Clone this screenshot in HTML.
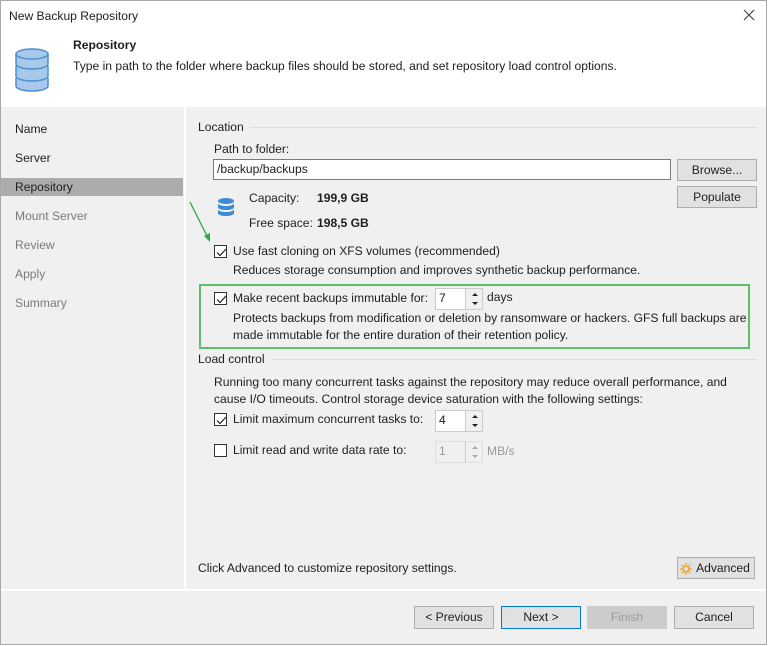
<!DOCTYPE html>
<html><head><meta charset="utf-8"><style>
*{box-sizing:border-box;margin:0;padding:0}
body{width:768px;height:646px;background:#fff;font-family:"Liberation Sans",sans-serif;font-size:12.1px;color:#1e1e1e;position:relative;overflow:hidden}
.a{position:absolute;white-space:nowrap}
.win{position:absolute;left:0;top:0;width:767px;height:645px;border:1px solid #a8a8a8;background:#f0f0f0}
.hdr{position:absolute;left:1px;top:1px;width:765px;height:106px;background:#fff}
.nav{color:#1e1e1e}
.dis{color:#7a7a7a}
.btn{position:absolute;background:#e1e1e1;border:1px solid #adadad;text-align:center;line-height:20px;font-size:12.1px}
.cb{position:absolute;width:13px;height:13px;border:1px solid #333;background:#fff}
.cb svg{position:absolute;left:1px;top:1px}
.inp{position:absolute;background:#fff;border:1px solid #7a7a7a;padding-left:3px;line-height:19px}
.spin{position:absolute;width:17px;height:20px;border-left:1px solid #ccc;background:#f0f0f0}
</style></head><body>
<div class="win"></div>
<div class="hdr"></div>
<div class="a" style="left:9px;top:9px">New Backup Repository</div>
<svg class="a" style="left:742px;top:8px" width="14" height="14"><path d="M2 2L12 12M12 2L2 12" stroke="#444" stroke-width="1.2"/></svg>
<svg class="a" style="left:14px;top:44px" width="40" height="50">
<g fill="#a9c9ea" stroke="#4d8fd0" stroke-width="1.5">
<path d="M2 34v8c0 3 8 5 16 5s16-2 16-5v-8"/>
<path d="M2 22v10c0 3 8 5 16 5s16-2 16-5V22"/>
<path d="M2 10v10c0 3 8 5 16 5s16-2 16-5V10"/>
<ellipse cx="18" cy="10" rx="16" ry="5"/>
</g></svg>
<div class="a" style="left:73px;top:38px;font-weight:bold">Repository</div>
<div class="a" style="left:73px;top:59px">Type in path to the folder where backup files should be stored, and set repository load control options.</div>
<div class="a" style="left:184px;top:107px;width:2px;height:483px;background:#fff"></div>
<div class="a" style="left:1px;top:589px;width:765px;height:2px;background:#fff"></div>
<div class="a" style="left:1px;top:178px;width:182px;height:18px;background:#acacac"></div>
<div class="a nav" style="left:15px;top:122px">Name</div>
<div class="a nav" style="left:15px;top:151px">Server</div>
<div class="a nav" style="left:15px;top:180px">Repository</div>
<div class="a dis" style="left:15px;top:209px">Mount Server</div>
<div class="a dis" style="left:15px;top:238px">Review</div>
<div class="a dis" style="left:15px;top:267px">Apply</div>
<div class="a dis" style="left:15px;top:296px">Summary</div>

<div class="a" style="left:198px;top:120px">Location</div>
<div class="a" style="left:250px;top:127px;width:507px;height:1px;background:#dcdcdc"></div>
<div class="a" style="left:214px;top:142px">Path to folder:</div>
<div class="inp" style="left:213px;top:159px;width:458px;height:21px">/backup/backups</div>
<div class="btn" style="left:677px;top:159px;width:80px;height:22px">Browse...</div>
<div class="btn" style="left:677px;top:186px;width:80px;height:22px">Populate</div>
<svg class="a" style="left:217px;top:197px" width="20" height="22"><g fill="#3d8bd1"><ellipse cx="9" cy="4" rx="8" ry="3"/><path d="M1 6c0 2 4 3 8 3s8-1 8-3v4c0 2-4 3-8 3s-8-1-8-3z"/><path d="M1 12c0 2 4 3 8 3s8-1 8-3v4c0 2-4 3-8 3s-8-1-8-3z"/></g></svg>
<div class="a" style="left:249px;top:191px">Capacity:</div>
<div class="a" style="left:317px;top:191px;font-weight:bold">199,9 GB</div>
<div class="a" style="left:249px;top:216px">Free space:</div>
<div class="a" style="left:317px;top:216px;font-weight:bold">198,5 GB</div>
<svg class="a" style="left:188px;top:200px" width="26" height="46"><path d="M2 2L21 40" stroke="#2eaa48" stroke-width="1.3"/><path d="M16 36L22 42L22 33z" fill="#2eaa48"/></svg>
<div class="cb" style="left:214px;top:245px"><svg width="11" height="11"><path d="M1 5.5L4 8.5L10 2" stroke="#222" fill="none" stroke-width="1.2"/></svg></div>
<div class="a" style="left:233px;top:244px">Use fast cloning on XFS volumes (recommended)</div>
<div class="a" style="left:233px;top:263px">Reduces storage consumption and improves synthetic backup performance.</div>
<div class="a" style="left:199px;top:284px;width:551px;height:65px;border:2px solid #5cbf6c"></div>
<div class="cb" style="left:214px;top:292px"><svg width="11" height="11"><path d="M1 5.5L4 8.5L10 2" stroke="#222" fill="none" stroke-width="1.2"/></svg></div>
<div class="a" style="left:233px;top:291px">Make recent backups immutable for:</div>
<div class="inp" style="left:435px;top:288px;width:48px;height:22px;border-color:#ccc">7<div class="spin" style="right:0;top:0"></div></div>
<svg class="a" style="left:469px;top:291px" width="12" height="16"><path d="M3 5L6 2L9 5z M3 11L6 14L9 11z" fill="#222"/></svg>
<div class="a" style="left:487px;top:290px">days</div>
<div class="a" style="left:233px;top:311px">Protects backups from modification or deletion by ransomware or hackers. GFS full backups are</div>
<div class="a" style="left:233px;top:328px">made immutable for the entire duration of their retention policy.</div>
<div class="a" style="left:198px;top:352px">Load control</div>
<div class="a" style="left:272px;top:359px;width:485px;height:1px;background:#dcdcdc"></div>
<div class="a" style="left:214px;top:375px">Running too many concurrent tasks against the repository may reduce overall performance, and</div>
<div class="a" style="left:214px;top:392px">cause I/O timeouts. Control storage device saturation with the following settings:</div>
<div class="cb" style="left:214px;top:413px"><svg width="11" height="11"><path d="M1 5.5L4 8.5L10 2" stroke="#222" fill="none" stroke-width="1.2"/></svg></div>
<div class="a" style="left:233px;top:412px">Limit maximum concurrent tasks to:</div>
<div class="inp" style="left:435px;top:410px;width:48px;height:22px;border-color:#ccc">4<div class="spin" style="right:0;top:0"></div></div>
<svg class="a" style="left:469px;top:413px" width="12" height="16"><path d="M3 5L6 2L9 5z M3 11L6 14L9 11z" fill="#222"/></svg>
<div class="cb" style="left:214px;top:444px"></div>
<div class="a" style="left:233px;top:443px">Limit read and write data rate to:</div>
<div class="inp" style="left:435px;top:441px;width:48px;height:22px;border-color:#ddd;background:#f0f0f0;color:#999">1<div class="spin" style="right:0;top:0;background:#f0f0f0"></div></div>
<svg class="a" style="left:469px;top:444px" width="12" height="16"><path d="M3 5L6 2L9 5z M3 11L6 14L9 11z" fill="#aaa"/></svg>
<div class="a" style="left:487px;top:444px;color:#999">MB/s</div>
<div class="a" style="left:198px;top:561px">Click Advanced to customize repository settings.</div>
<div class="btn" style="left:677px;top:557px;width:78px;height:22px;padding-left:14px">Advanced</div>
<svg class="a" style="left:680px;top:563px" width="12" height="12"><circle cx="6" cy="6" r="3" fill="none" stroke="#f0a020" stroke-width="1.5"/><path d="M6 0v2M6 10v2M0 6h2M10 6h2M1.8 1.8l1.4 1.4M8.8 8.8l1.4 1.4M1.8 10.2l1.4-1.4M8.8 3.2l1.4-1.4" stroke="#f0a020" stroke-width="1.2"/></svg>
<div class="btn" style="left:414px;top:606px;width:80px;height:23px">&lt; Previous</div>
<div class="btn" style="left:501px;top:606px;width:80px;height:23px;border-color:#0078d7">Next &gt;</div>
<div class="btn" style="left:587px;top:606px;width:80px;height:23px;background:#ccc;border-color:#ccc;color:#9a9a9a">Finish</div>
<div class="btn" style="left:674px;top:606px;width:80px;height:23px">Cancel</div>
</body></html>
